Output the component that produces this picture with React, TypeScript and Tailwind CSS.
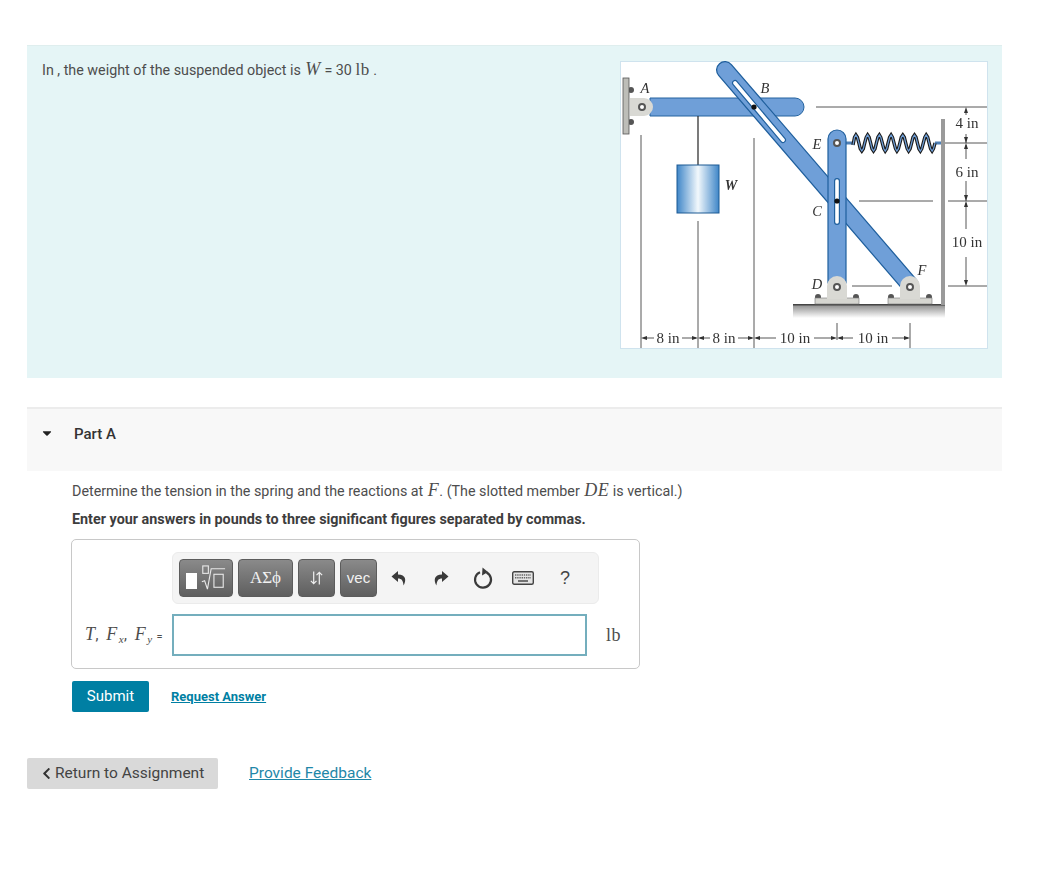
import { FaChevronLeft, FaCaretDown } from "react-icons/fa";

const roboto = { fontFamily: "Roboto, sans-serif" };
const serif = { fontFamily: "'Liberation Serif', serif" };

// spring coils between E and the wall
const springPath = () => {
  let d = "M233 84";
  for (let i = 1; i <= 56; i++) {
    const x = 233 + (i / 56) * 82;
    const y = 82 + Math.sin((i / 56) * Math.PI * 2 * 7) * -8;
    d += ` L${x.toFixed(1)} ${y.toFixed(1)}`;
  }
  return d;
};

const Clevis = ({ x }: { x: number }) => (
  <g>
    <circle cx={x - 19} cy={236} r={3} fill="#555" />
    <circle cx={x + 19} cy={236} r={3} fill="#555" />
    <rect x={x - 22} y={237} width={44} height={6} fill="#d5d5d0" stroke="#777" strokeWidth="0.6" />
    <path d={`M${x - 10} 238 L${x - 10} 225 A10 10 0 0 1 ${x + 10} 225 L${x + 10} 238 Z`} fill="#d9d9d4" />
    <circle cx={x} cy={226} r={3} fill="#fff" stroke="#555" strokeWidth="2" />
  </g>
);

const Figure = () => (
  <svg viewBox="0 0 368 288" className="w-[368px] h-[288px] blur-[0.5px]" style={serif}>
    <defs>
      <linearGradient id="weight" x1="0" x2="1" y1="0" y2="0">
        <stop offset="0" stopColor="#3f86c8" />
        <stop offset="0.5" stopColor="#f2f8fc" />
        <stop offset="1" stopColor="#3f86c8" />
      </linearGradient>
      <linearGradient id="floor" x1="0" x2="0" y1="0" y2="1">
        <stop offset="0" stopColor="#8f8f8f" />
        <stop offset="1" stopColor="#ffffff" />
      </linearGradient>
    </defs>
    <rect x="0.5" y="0.5" width="367" height="287" fill="#fff" stroke="#cfe3ee" />

    {/* dimension lines */}
    <g stroke="#444" strokeWidth="0.9" fill="none">
      <path d="M21 74V287M78 160V287M134 77V287M217 262V279M290 262V287" />
      <path d="M196 46H367M325 82H367M239 140H313M328 140H367M232 225H272M328 225H367" />
      <path d="M346 49V54M346 73V82M346 84V98M346 120V140M346 142V168M346 196V222" />
      <path d="M24 277H34M62 277H76M80 277H90M118 277H132M136 277H156M194 277H214M219 277H233M272 277H288" />
    </g>
    <g fill="#333">
      <path d="M21 277l6 -2v4zM78 277l-6 -2v4zM78 277l6 -2v4zM134 277l-6 -2v4zM134 277l6 -2v4zM217 277l-6 -2v4zM217 277l6 -2v4zM290 277l-6 -2v4z" />
      <path d="M346 46l-2 6h4zM346 82l-2 -6h4zM346 82l-2 6h4zM346 140l-2 -6h4zM346 140l-2 6h4zM346 225l-2 -6h4z" />
    </g>
    <g fontSize="15" fill="#333" textAnchor="middle">
      <text x="48" y="282">8 in</text>
      <text x="104" y="282">8 in</text>
      <text x="175" y="282">10 in</text>
      <text x="253" y="282">10 in</text>
      <text x="347" y="67">4 in</text>
      <text x="347" y="116">6 in</text>
      <text x="347" y="186">10 in</text>
    </g>

    {/* wall at A */}
    <circle cx="11" cy="29" r="3" fill="#555" />
    <circle cx="11" cy="61" r="3" fill="#555" />
    <rect x="3" y="17" width="6" height="56" fill="#bdbdb8" stroke="#555" strokeWidth="0.8" />

    {/* member AB */}
    <path d="M30 37H175A9 9 0 0 1 175 55H30Z" fill="#6f9fd8" stroke="#24639f" strokeWidth="1" />
    <path d="M10 37H24A9 9 0 0 1 24 55H10Z" fill="#d9d9d4" />
    <circle cx="22" cy="46" r="3" fill="#fff" stroke="#555" strokeWidth="2" />

    {/* weight */}
    <path d="M78 55V104" stroke="#222" strokeWidth="1.2" />
    <rect x="57" y="104" width="42" height="48" fill="url(#weight)" stroke="#1d5a94" strokeWidth="1" />
    <text x="111" y="129" fontSize="14" fontStyle="italic" fontWeight="bold" fill="#333" textAnchor="middle">W</text>

    {/* diagonal member */}
    <line x1="105" y1="9" x2="290" y2="224" stroke="#1f5f9d" strokeWidth="18" strokeLinecap="round" />
    <line x1="105" y1="9" x2="290" y2="224" stroke="#6f9fd8" strokeWidth="15.5" strokeLinecap="round" />
    <line x1="115" y1="22" x2="163" y2="79" stroke="#1f5f9d" strokeWidth="6" strokeLinecap="round" />
    <line x1="115" y1="22" x2="163" y2="79" stroke="#fff" strokeWidth="3.6" strokeLinecap="round" />
    <circle cx="134" cy="46" r="2.6" fill="#111" />

    {/* spring */}
    <path d="M225 82H233M315 82H323" stroke="#4e7fb5" strokeWidth="3" />
    <path d={springPath()} fill="none" stroke="#1b1b1b" strokeWidth="3.4" />
    <path d={springPath()} fill="none" stroke="#6f9fd8" strokeWidth="1.2" />

    {/* wall and floor */}
    <rect x="173" y="244" width="152" height="13" fill="url(#floor)" />
    <rect x="173" y="243" width="152" height="1.5" fill="#444" />
    <rect x="321" y="58" width="4" height="186" fill="#9a9a9a" />

    {/* slotted member DE */}
    <path d="M208 222V78A9 9 0 0 1 226 78V222Z" fill="#6f9fd8" stroke="#1f5f9d" strokeWidth="1.2" />
    <circle cx="217" cy="82" r="3" fill="#fff" stroke="#555" strokeWidth="2" />
    <line x1="217" y1="120" x2="217" y2="161" stroke="#1f5f9d" strokeWidth="6" strokeLinecap="round" />
    <line x1="217" y1="120" x2="217" y2="161" stroke="#fff" strokeWidth="3.6" strokeLinecap="round" />
    <circle cx="217" cy="140" r="2.6" fill="#111" />

    <Clevis x={217} />
    <Clevis x={290} />

    <g fontSize="14.5" fontStyle="italic" fill="#333" textAnchor="middle">
      <text x="25" y="32">A</text>
      <text x="145" y="32">B</text>
      <text x="197" y="88">E</text>
      <text x="197" y="155">C</text>
      <text x="197" y="228">D</text>
      <text x="302" y="214">F</text>
    </g>
  </svg>
);

const ToolBtn = ({ className, children }: { className: string; children: React.ReactNode }) => (
  <div className={`shrink-0 h-[38px] rounded-[4px] border border-[#5c5c5c] bg-gradient-to-b from-[#8a8a8a] to-[#5f5f5f] text-[#f2f2f2] flex items-center justify-center ${className}`}>
    {children}
  </div>
);

const Undo = ({ flip }: { flip?: boolean }) => (
  <svg viewBox="0 0 16 18" className={`w-[16px] h-[18px] ${flip ? "-scale-x-100" : ""}`} fill="#3a3a3a">
    <path d="M7 2 L0.5 7.5 L7 13 V9.6 C10.5 9.6 12 11.5 12.6 16.5 C15.5 11 15 5.6 7 5.4 Z" />
  </svg>
);

const Toolbar = () => (
  <div className="ml-[100px] w-[427px] h-[52px] bg-[#f4f4f4] border border-[#ebebeb] rounded-[6px] flex items-center pl-[6px]">
    <ToolBtn className="w-[54px] gap-[3px]">
      <div className="w-[11px] h-[16px] bg-white mt-[6px]" />
      <svg viewBox="0 0 28 30" className="w-[26px] h-[28px]" fill="none" stroke="#e8e8e8" strokeWidth="1.2">
        <rect x="3" y="2" width="6" height="8" />
        <path d="M2 19l3 -1 3 9 4 -22h15" />
        <rect x="15" y="11" width="10" height="14" />
      </svg>
    </ToolBtn>
    <ToolBtn className="w-[55px] ml-[5px] text-[17px]">
      <span style={serif}>ΑΣϕ</span>
    </ToolBtn>
    <ToolBtn className="w-[37px] ml-[5px]">
      <svg viewBox="0 0 16 16" className="w-[15px] h-[16px]" fill="none" stroke="#eee" strokeWidth="1.3">
        <path d="M5 1v13M2 11l3 3 3-3M11 15V2M8 5l3-3 3 3" />
      </svg>
    </ToolBtn>
    <ToolBtn className="w-[37px] ml-[5px] text-[15px]">
      <span style={{ fontFamily: "'Liberation Sans', sans-serif" }}>vec</span>
    </ToolBtn>
    <div className="ml-[14px]"><Undo /></div>
    <div className="ml-[26px]"><Undo flip /></div>
    <svg viewBox="0 0 20 22" className="w-[20px] h-[22px] ml-[24px]" fill="none" stroke="#3a3a3a" strokeWidth="2.2">
      <path d="M7 5.2A8 8 0 1 0 13.5 5.4" />
      <path d="M9.5 0.5l5.5 4.6-6 3.4z" fill="#3a3a3a" stroke="none" />
    </svg>
    <svg viewBox="0 0 22 14" className="w-[22px] h-[14px] ml-[19px]">
      <rect x="0.7" y="0.7" width="20.6" height="12.6" rx="1.5" fill="#e4e4e4" stroke="#444" strokeWidth="1.4" />
      <path d="M3 4h16M3 6.8h16" stroke="#666" strokeWidth="1.4" strokeDasharray="1.4 0.8" />
      <path d="M6 10h10" stroke="#555" strokeWidth="1.6" />
    </svg>
    <span className="ml-[26px] text-[18px] text-[#444]" style={{ fontFamily: "'Liberation Sans', sans-serif" }}>?</span>
  </div>
);

const M = ({ children }: { children: React.ReactNode }) => (
  <span className="italic text-[18px] leading-[18px] tracking-[0.5px] ml-[1px]" style={serif}>{children}</span>
);

const Sub = ({ children }: { children: React.ReactNode }) => (
  <sub className="text-[11px] italic ml-[1px]" style={serif}>{children}</sub>
);

export default function App() {
  return (
    <div className="bg-white w-[1053px] h-[882px] pt-[45px] pl-[27px] overflow-hidden text-[#4d4d4d]" style={roboto}>
      <div className="w-[975px] h-[333px] bg-[#e5f5f6] border-t border-[#dfeeee] flex items-start justify-between pl-[15px] pr-[14px] pt-[15px]">
        <p className="text-[14.3px] leading-[20px] mt-[-1px]">
          In , the weight of the suspended object is <M>W</M> = 30 <span className="text-[17px] tracking-[0.5px]" style={serif}>lb</span> .
        </p>
        <Figure />
      </div>

      <div className="mt-[29px] w-[975px] h-[64px] bg-[#f8f8f8] border-t-2 border-[#ececec] flex items-start pt-[15px]">
        <FaCaretDown className="ml-[13px] mt-[2px] w-[14px] h-[14px] text-[#222]" />
        <span className="ml-[20px] text-[15px] leading-[20px] font-medium text-[#333]">Part A</span>
      </div>

      <div className="pl-[45px]">
        <p className="mt-[10px] h-[20px] text-[14.3px] leading-[20px]">
          Determine the tension in the spring and the reactions at <M>F</M>. (The slotted member <M>DE</M> is vertical.)
        </p>
        <p className="mt-[9px] text-[14.35px] leading-[20px] font-bold text-[#3d3d3d]">
          Enter your answers in pounds to three significant figures separated by commas.
        </p>

        <div className="mt-[9px] -ml-[1px] w-[569px] h-[130px] border border-[#c8c8c8] rounded-[5px] pt-[12px]">
          <Toolbar />
          <div className="flex items-center mt-[10px]">
            <span className="w-[100px] pl-[12px] text-[15px] whitespace-nowrap">
              <M>T</M>,<span className="mr-[3px]"> </span><M>F<Sub>x</Sub></M>,<span className="mr-[3px]"> </span><M>F<Sub>y</Sub></M> <span className="text-[11px]">=</span>
            </span>
            <div className="w-[415px] h-[42px] border-2 border-[#74aebd] bg-white" />
            <span className="ml-[19px] text-[18px] tracking-[0.5px]" style={serif}>lb</span>
          </div>
        </div>

        <div className="flex items-center mt-[12px]">
          <button className="w-[77px] h-[31px] bg-[#007fa3] text-white text-[15px] rounded-[2px]">Submit</button>
          <a className="ml-[22px] text-[13px] font-bold text-[#007fa3] underline">Request Answer</a>
        </div>
      </div>

      <div className="flex items-start mt-[46px]">
        <button className="w-[191px] h-[31px] bg-[#d9d9d9] rounded-[2px] flex items-center pl-[14px] text-[15.5px] text-[#444]">
          <FaChevronLeft className="w-[11px] h-[13px] mr-[3px] text-[#333]" />
          Return to Assignment
        </button>
        <a className="ml-[31px] mt-[4px] text-[15.5px] text-[#1f87a8] underline">Provide Feedback</a>
      </div>
    </div>
  );
}
